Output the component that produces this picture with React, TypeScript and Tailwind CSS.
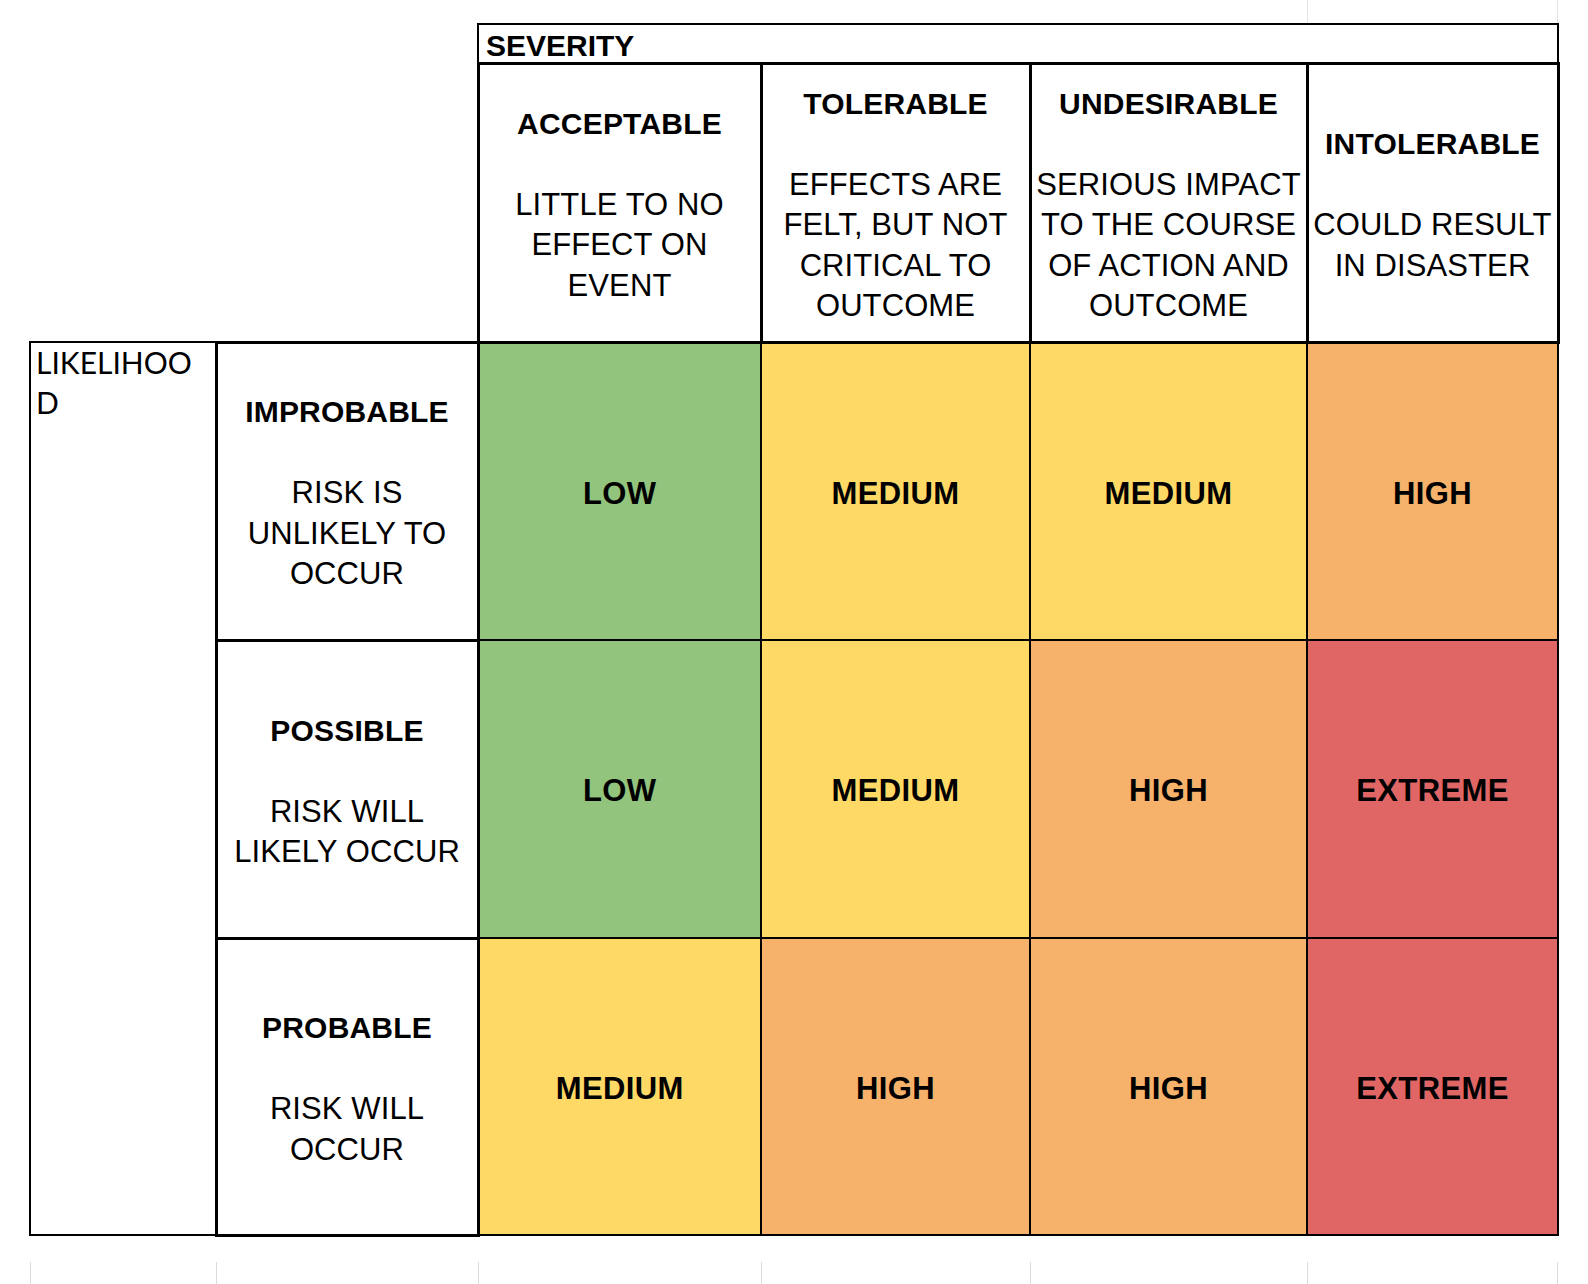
const severity = [
  { title: "ACCEPTABLE", lines: ["LITTLE TO NO", "EFFECT ON", "EVENT"] },
  { title: "TOLERABLE", lines: ["EFFECTS ARE", "FELT, BUT NOT", "CRITICAL TO", "OUTCOME"] },
  { title: "UNDESIRABLE", lines: ["SERIOUS IMPACT", "TO THE COURSE", "OF ACTION AND", "OUTCOME"] },
  { title: "INTOLERABLE", lines: ["COULD RESULT", "IN DISASTER"] },
];

const likelihood = [
  { title: "IMPROBABLE", lines: ["RISK IS", "UNLIKELY TO", "OCCUR"], values: ["LOW", "MEDIUM", "MEDIUM", "HIGH"] },
  { title: "POSSIBLE", lines: ["RISK WILL", "LIKELY OCCUR"], values: ["LOW", "MEDIUM", "HIGH", "EXTREME"] },
  { title: "PROBABLE", lines: ["RISK WILL", "OCCUR"], values: ["MEDIUM", "HIGH", "HIGH", "EXTREME"] },
];

const levelColor: Record<string, string> = {
  LOW: "bg-[#93c47d]",
  MEDIUM: "bg-[#ffd966]",
  HIGH: "bg-[#f6b26b]",
  EXTREME: "bg-[#e06666]",
};

function Label({ title, lines }: { title: string; lines: string[] }) {
  return (
    <div className="leading-[40.5px]">
      <div className="font-bold text-[30px] tracking-[0.2px]">{title}</div>
      <div className="mt-[40.5px] text-[31px] tracking-[0.1px]">
        {lines.map((line) => (
          <div key={line}>{line}</div>
        ))}
      </div>
    </div>
  );
}

export default function App() {
  const gridX = [30, 216, 478, 761, 1030, 1307, 1557];

  return (
    <div className="w-[1588px] h-[1284px] overflow-hidden bg-white flex flex-col font-['Liberation_Sans',Arial,sans-serif] text-[30px] text-black">
      {/* faint sheet gridlines above the table */}
      <div className="h-[23px] flex shrink-0">
        <div className="w-[1307px]" />
        <div className="w-[250px] border-l border-[#e3e3e3]" />
        <div className="border-l border-[#e3e3e3]" />
      </div>

      <table className="ml-[29px] table-fixed border-collapse w-[1528px] shrink-0">
        <colgroup>
          <col className="w-[186px]" />
          <col className="w-[262px]" />
          <col className="w-[283px]" />
          <col className="w-[269px]" />
          <col className="w-[277px]" />
          <col className="w-[251px]" />
        </colgroup>
        <tbody>
          <tr className="h-[39px]">
            <td colSpan={2} rowSpan={2} className="p-0" />
            <td
              colSpan={4}
              className="p-0 pl-[7px] pb-[1px] align-bottom border-2 border-black font-bold leading-[30px]"
            >
              SEVERITY
            </td>
          </tr>
          <tr className="h-[279px]">
            {severity.map((s) => (
              <td key={s.title} className="p-0 pt-[5px] border-[3px] border-black text-center align-middle">
                <Label title={s.title} lines={s.lines} />
              </td>
            ))}
          </tr>
          {likelihood.map((row, i) => (
            <tr key={row.title} className={i === 2 ? "h-[297px]" : "h-[298px]"}>
              {i === 0 && (
                <td
                  rowSpan={3}
                  className="p-0 pl-[5px] align-top border-2 border-black font-['Lato',sans-serif] text-[30px] leading-[40px]"
                >
                  <div className="-mt-[1px]">LIKELIHOO</div>
                  <div>D</div>
                </td>
              )}
              <td className="p-0 pt-[5px] border-[3px] border-black text-center align-middle">
                <Label title={row.title} lines={row.lines} />
              </td>
              {row.values.map((v, j) => (
                <td
                  key={j}
                  className={`p-0 pt-[5px] border-2 border-black text-center align-middle font-bold text-[31px] tracking-[0.4px] ${levelColor[v]}`}
                >
                  {v}
                </td>
              ))}
            </tr>
          ))}
        </tbody>
      </table>

      {/* faint sheet gridlines below the table */}
      <div className="flex-1 flex items-end">
        <div className="h-[22px] w-full flex">
          {gridX.map((x, k) => (
            <div
              key={x}
              className={`h-full border-l border-[#dcdcdc] ${k === 0 ? "ml-[30px]" : ""}`}
              style={{ width: k < gridX.length - 1 ? gridX[k + 1] - x : 1 }}
            />
          ))}
        </div>
      </div>
    </div>
  );
}
